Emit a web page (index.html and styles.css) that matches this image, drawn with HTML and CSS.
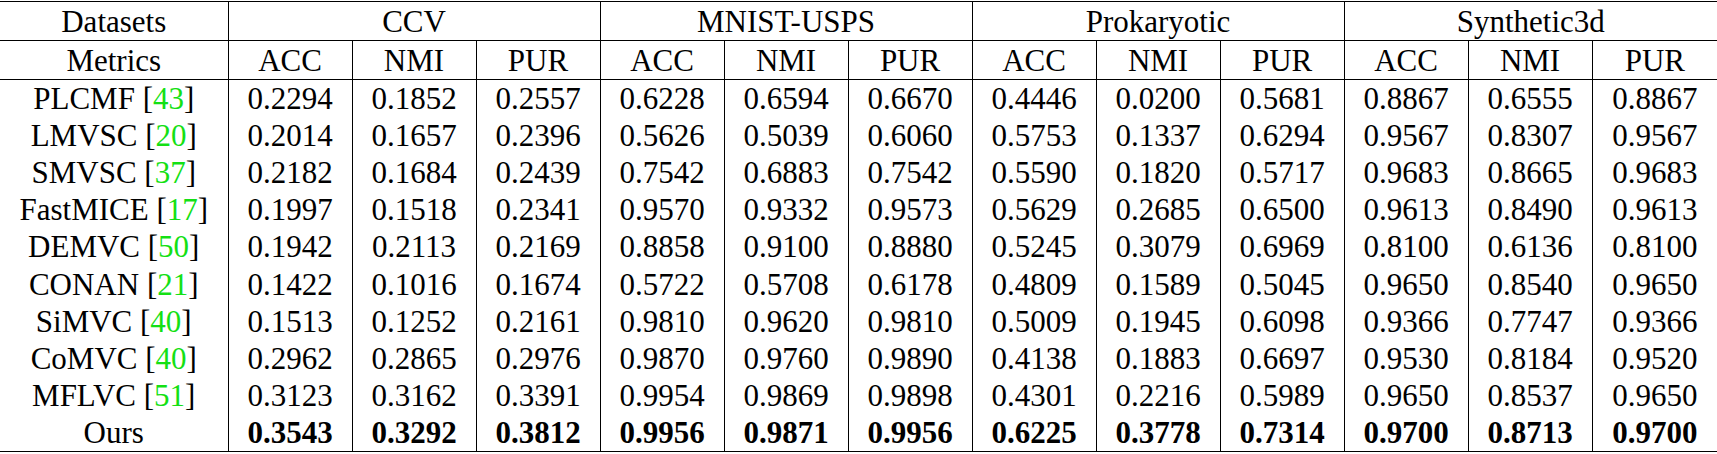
FILE: index.html
```html
<!DOCTYPE html>
<html>
<head>
<meta charset="utf-8">
<link rel="stylesheet" href="styles.css">
</head>
<body>
<table class="results">
  <colgroup>
    <col class="c-name">
    <col class="c-val"><col class="c-val"><col class="c-val">
    <col class="c-val"><col class="c-val"><col class="c-val">
    <col class="c-val"><col class="c-val"><col class="c-val">
    <col class="c-val"><col class="c-val"><col class="c-last">
  </colgroup>
  <thead>
    <tr class="head-row">
      <th class="name">Datasets</th>
      <th colspan="3" class="grp">CCV</th>
      <th colspan="3" class="grp">MNIST-USPS</th>
      <th colspan="3" class="grp">Prokaryotic</th>
      <th colspan="3">Synthetic3d</th>
    </tr>
    <tr class="head-row sub">
      <th class="name">Metrics</th>
      <th class="v">ACC</th><th class="v">NMI</th><th class="v">PUR</th>
      <th class="v">ACC</th><th class="v">NMI</th><th class="v">PUR</th>
      <th class="v">ACC</th><th class="v">NMI</th><th class="v">PUR</th>
      <th class="v">ACC</th><th class="v">NMI</th><th>PUR</th>
    </tr>
  </thead>
  <tbody>
    <tr><td class="name">PLCMF [<span class="cite">43</span>]</td><td class="v">0.2294</td><td class="v">0.1852</td><td class="v">0.2557</td><td class="v">0.6228</td><td class="v">0.6594</td><td class="v">0.6670</td><td class="v">0.4446</td><td class="v">0.0200</td><td class="v">0.5681</td><td class="v">0.8867</td><td class="v">0.6555</td><td>0.8867</td></tr>
    <tr><td class="name">LMVSC [<span class="cite">20</span>]</td><td class="v">0.2014</td><td class="v">0.1657</td><td class="v">0.2396</td><td class="v">0.5626</td><td class="v">0.5039</td><td class="v">0.6060</td><td class="v">0.5753</td><td class="v">0.1337</td><td class="v">0.6294</td><td class="v">0.9567</td><td class="v">0.8307</td><td>0.9567</td></tr>
    <tr><td class="name">SMVSC [<span class="cite">37</span>]</td><td class="v">0.2182</td><td class="v">0.1684</td><td class="v">0.2439</td><td class="v">0.7542</td><td class="v">0.6883</td><td class="v">0.7542</td><td class="v">0.5590</td><td class="v">0.1820</td><td class="v">0.5717</td><td class="v">0.9683</td><td class="v">0.8665</td><td>0.9683</td></tr>
    <tr><td class="name">FastMICE [<span class="cite">17</span>]</td><td class="v">0.1997</td><td class="v">0.1518</td><td class="v">0.2341</td><td class="v">0.9570</td><td class="v">0.9332</td><td class="v">0.9573</td><td class="v">0.5629</td><td class="v">0.2685</td><td class="v">0.6500</td><td class="v">0.9613</td><td class="v">0.8490</td><td>0.9613</td></tr>
    <tr><td class="name">DEMVC [<span class="cite">50</span>]</td><td class="v">0.1942</td><td class="v">0.2113</td><td class="v">0.2169</td><td class="v">0.8858</td><td class="v">0.9100</td><td class="v">0.8880</td><td class="v">0.5245</td><td class="v">0.3079</td><td class="v">0.6969</td><td class="v">0.8100</td><td class="v">0.6136</td><td>0.8100</td></tr>
    <tr><td class="name">CONAN [<span class="cite">21</span>]</td><td class="v">0.1422</td><td class="v">0.1016</td><td class="v">0.1674</td><td class="v">0.5722</td><td class="v">0.5708</td><td class="v">0.6178</td><td class="v">0.4809</td><td class="v">0.1589</td><td class="v">0.5045</td><td class="v">0.9650</td><td class="v">0.8540</td><td>0.9650</td></tr>
    <tr><td class="name">SiMVC [<span class="cite">40</span>]</td><td class="v">0.1513</td><td class="v">0.1252</td><td class="v">0.2161</td><td class="v">0.9810</td><td class="v">0.9620</td><td class="v">0.9810</td><td class="v">0.5009</td><td class="v">0.1945</td><td class="v">0.6098</td><td class="v">0.9366</td><td class="v">0.7747</td><td>0.9366</td></tr>
    <tr><td class="name">CoMVC [<span class="cite">40</span>]</td><td class="v">0.2962</td><td class="v">0.2865</td><td class="v">0.2976</td><td class="v">0.9870</td><td class="v">0.9760</td><td class="v">0.9890</td><td class="v">0.4138</td><td class="v">0.1883</td><td class="v">0.6697</td><td class="v">0.9530</td><td class="v">0.8184</td><td>0.9520</td></tr>
    <tr><td class="name">MFLVC [<span class="cite">51</span>]</td><td class="v">0.3123</td><td class="v">0.3162</td><td class="v">0.3391</td><td class="v">0.9954</td><td class="v">0.9869</td><td class="v">0.9898</td><td class="v">0.4301</td><td class="v">0.2216</td><td class="v">0.5989</td><td class="v">0.9650</td><td class="v">0.8537</td><td>0.9650</td></tr>
    <tr class="ours"><td class="name">Ours</td><td class="v">0.3543</td><td class="v">0.3292</td><td class="v">0.3812</td><td class="v">0.9956</td><td class="v">0.9871</td><td class="v">0.9956</td><td class="v">0.6225</td><td class="v">0.3778</td><td class="v">0.7314</td><td class="v">0.9700</td><td class="v">0.8713</td><td>0.9700</td></tr>
  </tbody>
</table>
</body>
</html>
```

FILE: styles.css
```css
html, body {
  margin: 0;
  padding: 0;
  background: #fff;
}
body {
  padding-top: 1px;
  font-family: "Liberation Serif", "Times New Roman", serif;
}
.results {
  border-collapse: collapse;
  table-layout: fixed;
  width: 1717px;
  font-family: "Liberation Serif", "Times New Roman", serif;
  font-size: 31px;
  color: #000;
  border-top: 1px solid #000;
  border-bottom: 1px solid #000;
}
.c-name { width: 228px; }
.c-val { width: 124px; }
.c-last { width: 125px; }
.results th, .results td {
  padding: 0;
  text-align: center;
  font-family: inherit;
  font-weight: normal;
  white-space: nowrap;
  line-height: 1;
}
.head-row th {
  height: 38px;
  border-bottom: 1px solid #000;
}
.results .name {
  border-right: 1px solid #000;
}
.results .grp {
  border-right: 1px solid #000;
}
.sub .v {
  border-right: 1px solid #000;
}
.results td {
  height: 37.1px;
}
.results td.v {
  border-right: 1px solid #000;
}
.cite {
  color: #14e014;
}
.ours td {
  font-weight: bold;
}
.ours td.name {
  font-weight: normal;
}
```
